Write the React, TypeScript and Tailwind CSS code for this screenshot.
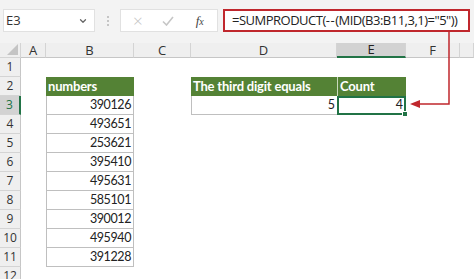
import { ChevronDown } from 'lucide-react';

const cols = ['A', 'B', 'C', 'D', 'E', 'F', ''];
const numbers = ['390126', '493651', '253621', '395410', '495631', '585101', '390012', '495940', '391228'];
const rows = [1, 2, 3, 4, 5, 6, 7, 8, 9, 10, 11, 12];

const cellFont = { fontFamily: 'Lato, "Open Sans", sans-serif' };

function Cell({ row, col }: { row: number; col: number }) {
  // B column table
  if (col === 1 && row === 2) {
    return (
      <div className="bg-[#548235] text-white font-bold text-[13px] tracking-[-0.2px] leading-none flex items-center pl-[2px] border-r border-[#548235]">
        numbers
      </div>
    );
  }
  if (col === 1 && row >= 3 && row <= 11) {
    return (
      <div className="border-l border-r border-b border-[#bfbfbf] text-[#222] text-[12.5px] tracking-[-0.4px] leading-none flex items-center justify-end pr-[2px]">
        {numbers[row - 3]}
      </div>
    );
  }
  if (col === 4 && row === 2) {
    return (
      <div className="bg-[#548235] text-white font-bold text-[13px] tracking-[-0.2px] leading-none flex items-center pl-[2px] border-l border-[#c9d9bd]">
        Count
      </div>
    );
  }
  if (col === 3 && row === 2) {
    return (
      <div className="bg-[#548235] text-white font-bold text-[13px] tracking-[-0.2px] leading-none flex items-center pl-[2px] whitespace-nowrap">
        The third digit equals
      </div>
    );
  }
  if (col === 3 && row === 3) {
    return (
      <div className="border-l border-b border-[#bfbfbf] text-[#222] text-[12.5px] leading-none flex items-center justify-end pr-[2px]">
        5
      </div>
    );
  }
  if (col === 4 && row === 3) {
    return (
      <div className="relative border-2 border-[#217346] text-[#222] text-[12.5px] leading-none flex items-center justify-end pr-[1px]">
        4
        <span className="absolute -right-[4px] -bottom-[4px] w-[6px] h-[6px] bg-[#217346] border border-white" />
      </div>
    );
  }
  return <div />;
}

export default function App() {
  return (
    <div className="relative w-[474px] h-[279px] overflow-hidden bg-white select-none">
      {/* formula bar */}
      <div className="h-[43px] bg-[#f3f3f3] flex items-start pt-[9px] pl-[3px]" style={{ fontFamily: '"Open Sans", "Noto Sans", sans-serif' }}>
        <div className="w-[92px] h-[23px] bg-white border border-[#e1e1e1] flex items-center justify-between pl-[2px] pr-[6px]">
          <span className="text-[13px] text-[#333]">E3</span>
          <ChevronDown className="w-[10px] h-[10px] text-[#666]" strokeWidth={3} />
        </div>
        <div className="w-[25px] h-[23px] flex flex-col items-center justify-center gap-[2px]">
          <span className="w-[2px] h-[2px] bg-[#c5c5c5]" />
          <span className="w-[2px] h-[2px] bg-[#c5c5c5]" />
          <span className="w-[2px] h-[2px] bg-[#c5c5c5]" />
        </div>
        <div className="w-[98px] h-[23px] bg-white border border-[#e1e1e1] flex items-center text-[#c3c3c3]">
          <span className="ml-[12px] text-[17px] leading-none font-light">×</span>
          <svg className="ml-[19px]" width="12" height="10" viewBox="0 0 12 10">
            <path d="M1 5.5 L4.5 9 L11 1" fill="none" stroke="#c6c6c6" strokeWidth="1.6" />
          </svg>
          <span className="ml-[22px] text-[13px] italic text-[#444]" style={{ fontFamily: '"Liberation Serif", serif' }}>
            f<span className="text-[10px]">x</span>
          </span>
        </div>
        <div className="ml-[5px] w-[247px] h-[23px] bg-white border-2 border-[#c0272d] flex items-center pl-[7px] text-[13px] tracking-[-0.5px] text-[#222] whitespace-nowrap">
          =SUMPRODUCT(<span className="tracking-[0.5px]">--</span>(MID(B3:B11,3,1)="5"))
        </div>
      </div>

      {/* sheet */}
      <div
        className="grid grid-cols-[21px_25px_88px_57px_146px_69px_54px_1fr] grid-rows-[15px_repeat(12,19px)]"
        style={cellFont}
      >
        {/* corner */}
        <div className="bg-[#efefef] border-r border-b border-[#d4d4d4] flex items-end justify-end p-[2px]">
          <svg width="11" height="11" viewBox="0 0 11 11">
            <polygon points="11,0 11,11 0,11" fill="#c4c4c4" />
          </svg>
        </div>
        {cols.map((c, i) => (
          <div
            key={i}
            className={`border-r border-[#d4d4d4] flex items-center justify-center text-[13px] leading-none ${
              c === 'E' ? 'bg-[#d2d2d2] border-b-2 border-b-[#217346] text-[#222]' : 'bg-[#efefef] border-b border-b-[#c6c6c6] text-[#333]'
            }`}
            style={{ fontFamily: '"Open Sans", sans-serif' }}
          >
            {c}
          </div>
        ))}

        {rows.map((r) => (
          <div key={r} className="contents">
            <div
              className={`border-b border-[#d4d4d4] flex items-center justify-center text-[12px] leading-none ${
                r === 3 ? 'bg-[#d2d2d2] border-r-2 border-r-[#217346] text-[#217346]' : 'bg-[#efefef] border-r border-r-[#c6c6c6] text-[#333]'
              }`}
              style={{ fontFamily: '"Open Sans", sans-serif' }}
            >
              {r}
            </div>
            {[0, 1, 2, 3, 4, 5, 6].map((c) => (
              <Cell key={c} row={r} col={c} />
            ))}
          </div>
        ))}
      </div>

      {/* red callout arrow */}
      <svg className="absolute left-0 top-0 pointer-events-none" width="474" height="279">
        <polyline points="449,32 449,104 418,104" fill="none" stroke="#c0272d" strokeWidth="1.5" />
        <polygon points="410,104 420,100 420,108" fill="#c0272d" />
      </svg>
    </div>
  );
}
